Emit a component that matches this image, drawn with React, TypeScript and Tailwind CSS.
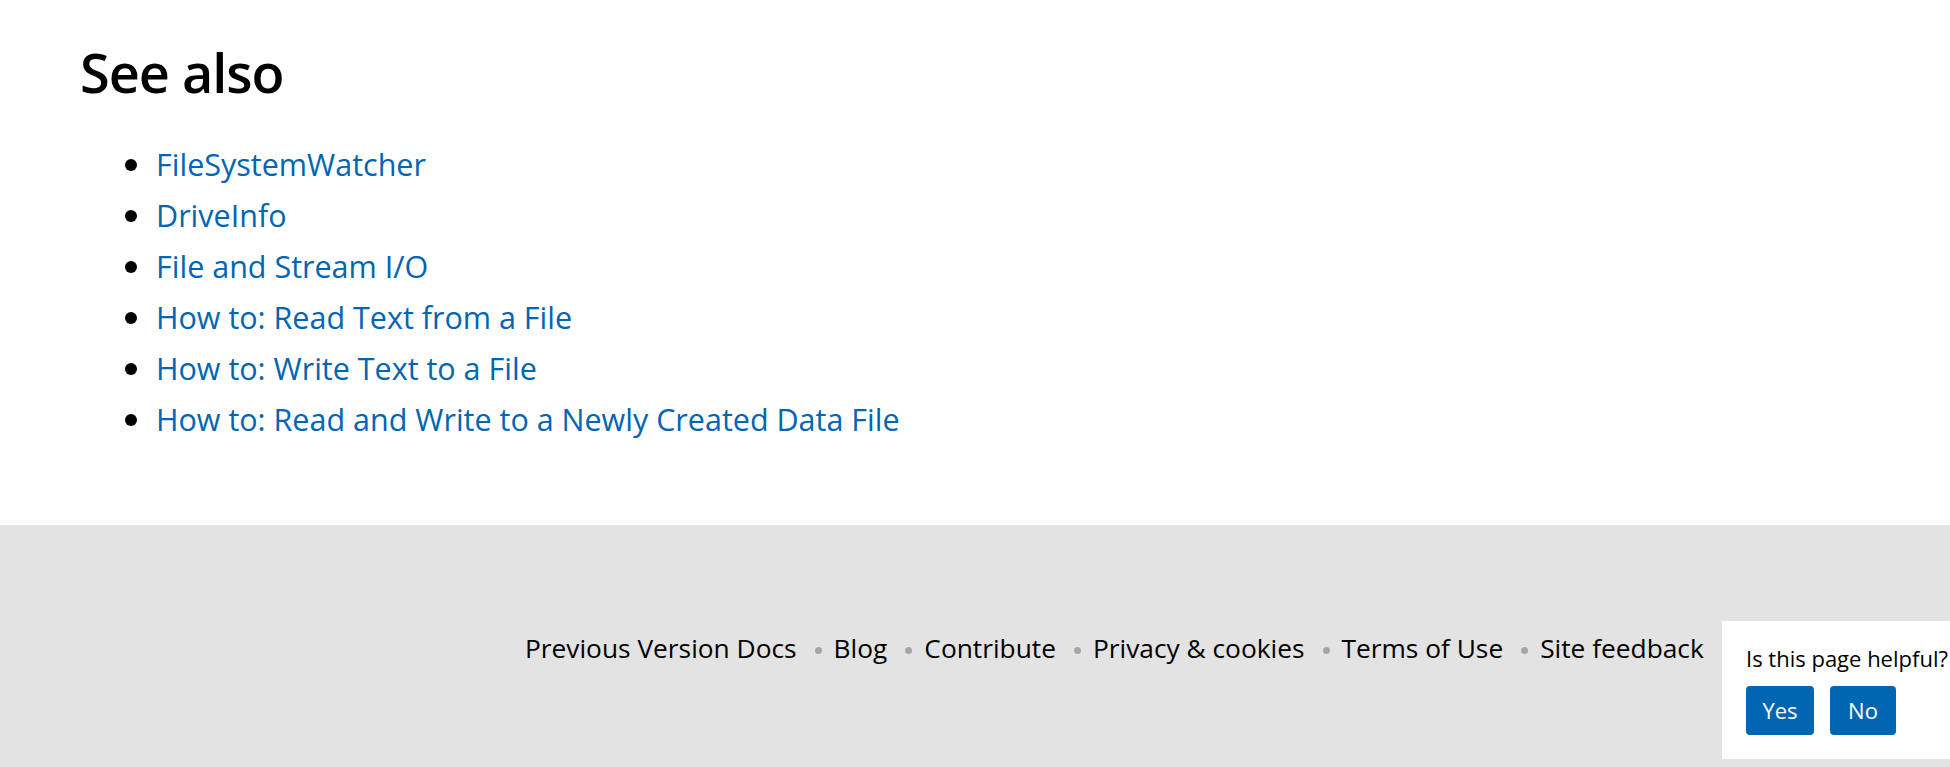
const links = [
  'FileSystemWatcher',
  'DriveInfo',
  'File and Stream I/O',
  'How to: Read Text from a File',
  'How to: Write Text to a File',
  'How to: Read and Write to a Newly Created Data File',
];

const footerLinks = [
  'Previous Version Docs',
  'Blog',
  'Contribute',
  'Privacy & cookies',
  'Terms of Use',
  'Site feedback',
  'Trademarks',
  '© Microsoft 2020',
];

export default function App() {
  return (
    <div className="relative h-[767px] w-[1950px] overflow-hidden bg-white font-['Open_Sans',sans-serif] text-black">
      <main className="pl-[80px] pt-[36px] pb-[80px]">
        <h2 className="text-[54px] leading-[72px] font-semibold tracking-[-1px]">See also</h2>
        <ul className="mt-[31px] pl-[45px]">
          {links.map((l) => (
            <li key={l} className="flex items-center text-[30.5px] leading-[51px]">
              <span className="mr-[19px] h-[12px] w-[12px] rounded-full bg-black" />
              <a href="#" className="text-[#0065b3]">
                {l}
              </a>
            </li>
          ))}
        </ul>
      </main>
      <footer className="h-[243px] bg-[#e3e3e3] pt-[103px]">
        <ul className="flex whitespace-nowrap pl-[525px] text-[26.3px] leading-[40px]">
          {footerLinks.map((l, i) => (
            <li key={l} className="flex items-center">
              {i > 0 && <span className="ml-[18px] mr-[12px] mt-[4px] h-[7px] w-[7px] rounded-full bg-[#a6a6a6]" />}
              <a href="#">{l}</a>
            </li>
          ))}
        </ul>
      </footer>
      <Feedback />
    </div>
  );
}

function Feedback() {
  return (
    <div className="absolute left-[1722px] top-[621px] h-[138px] w-[260px] bg-white pl-[24px] pt-[22px]">
      <p className="text-[22px] leading-[30px]">Is this page helpful?</p>
      <div className="mt-[13px] flex gap-[16px]">
        <button className="h-[49px] w-[68px] rounded-[4px] bg-[#0065b3] text-[22px] text-white">Yes</button>
        <button className="h-[49px] w-[66px] rounded-[4px] bg-[#0065b3] text-[22px] text-white">No</button>
      </div>
    </div>
  );
}
